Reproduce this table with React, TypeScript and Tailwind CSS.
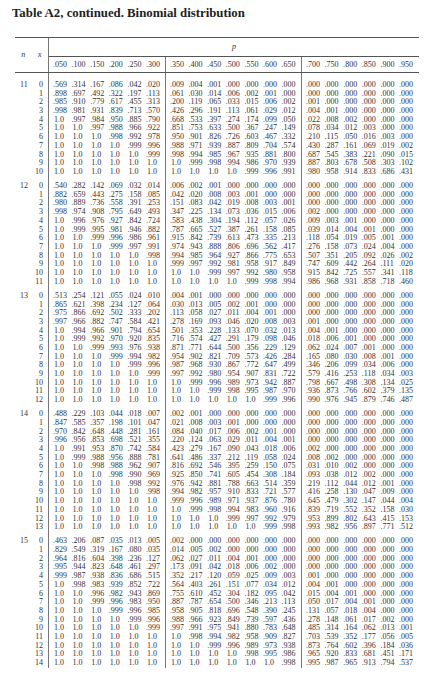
import React from 'react'

const PS = [0.05, 0.1, 0.15, 0.2, 0.25, 0.3, 0.35, 0.4, 0.45, 0.5, 0.55, 0.6, 0.65, 0.7, 0.75, 0.8, 0.85, 0.9, 0.95]
const GROUPS = [PS.slice(0, 6), PS.slice(6, 13), PS.slice(13)]
const NS = [11, 12, 13, 14, 15]

function choose(n: number, k: number) {
  let c = 1
  for (let i = 1; i <= k; i++) c = (c * (n - k + i)) / i
  return c
}

function cdf(n: number, p: number, x: number) {
  let s = 0
  for (let k = 0; k <= x; k++) s += choose(n, k) * Math.pow(p, k) * Math.pow(1 - p, n - k)
  return s
}

function fmt(v: number) {
  const r = Math.round(v * 1000)
  if (r >= 1000) return '1.0'
  return '.' + String(r).padStart(3, '0')
}

function Cell({ text }: { text: string }) {
  return <div className={text === '1.0' ? 'w-[18.6px] shrink-0 pl-[1px]' : 'w-[18.6px] shrink-0'}>{text}</div>
}

function Group({ ps, last }: { ps: number[]; last?: boolean }) {
  return (
    <div className={`${last ? 'w-[116px]' : ps.length === 7 ? 'w-[136px] border-r border-[#777]' : 'w-[117px] border-r border-[#777]'} pl-[4px] pt-[8px]`}>
      {NS.map((n, i) => (
        <div key={n} className={i > 0 ? 'mt-[5.5px]' : ''}>
          {Array.from({ length: n }, (_, x) => (
            <div key={x} className="flex h-[8.7px] leading-[8.7px]">
              {ps.map((p) => (
                <Cell key={p} text={fmt(cdf(n, p, x))} />
              ))}
            </div>
          ))}
        </div>
      ))}
    </div>
  )
}

export default function App() {
  return (
    <div className="w-[448px] h-[700px] bg-white text-[#333] font-['Liberation_Serif',serif] overflow-hidden">
      <div className="pl-[12px] pt-[5px] text-[12.8px] font-bold leading-[16px] text-[#222]">
        Table A2, continued. Binomial distribution
      </div>

      <div className="ml-[15px] w-[404px] mt-[16px] border-t border-[#555] text-[8px]">
        {/* header */}
        <div className="flex border-b border-[#555]">
          <div className="w-[34px] border-r border-[#777] flex items-center italic">
            <span className="w-[18px] text-center">n</span>
            <span className="w-[18px] text-center">x</span>
          </div>
          <div className="flex-1 flex flex-col">
            <div className="h-[19px] flex items-center justify-center italic border-b border-[#555]">p</div>
            <div className="flex h-[15px] items-center">
              {GROUPS.map((g, gi) => (
                <div
                  key={gi}
                  className={`${gi === 2 ? 'w-[116px]' : gi === 1 ? 'w-[136px] border-r border-[#777]' : 'w-[117px] border-r border-[#777]'} h-full flex items-center pl-[4px]`}
                >
                  {g.map((p) => (
                    <Cell key={p} text={p.toFixed(3).slice(1)} />
                  ))}
                </div>
              ))}
            </div>
          </div>
        </div>

        {/* body */}
        <div className="flex">
          <div className="w-[34px] border-r border-[#777] pt-[8px]">
            {NS.map((n, i) => (
              <div key={n} className={i > 0 ? 'mt-[5.5px]' : ''}>
                {Array.from({ length: n }, (_, x) => (
                  <div key={x} className="flex justify-between px-[5px] h-[8.7px] leading-[8.7px]">
                    <span>{x === 0 ? n : ''}</span>
                    <span>{x}</span>
                  </div>
                ))}
              </div>
            ))}
          </div>
          {GROUPS.map((g, gi) => (
            <Group key={gi} ps={g} last={gi === 2} />
          ))}
        </div>
      </div>
    </div>
  )
}
